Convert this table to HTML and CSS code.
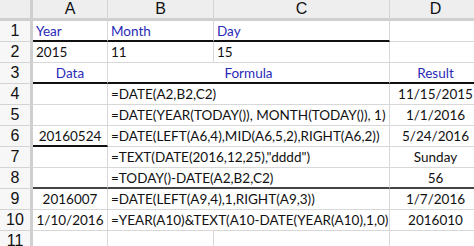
FILE: index.html
```html
<!DOCTYPE html>
<html>
<head>
<meta charset="utf-8">
<link rel="stylesheet" href="styles.css">
</head>
<body>
<div class="sheet">
  <div class="hd corner"></div>
  <div class="hd col">A</div>
  <div class="hd col">B</div>
  <div class="hd col">C</div>
  <div class="hd col">D</div>

  <div class="rh">1</div>
  <div class="c lbl thick">Year</div>
  <div class="c lbl thick">Month</div>
  <div class="c lbl thick">Day</div>
  <div class="c"></div>

  <div class="rh">2</div>
  <div class="c">2015</div>
  <div class="c">11</div>
  <div class="c">15</div>
  <div class="c"></div>

  <div class="rh">3</div>
  <div class="c lbl ctr thick">Data</div>
  <div class="c lbl ctr thick span2">Formula</div>
  <div class="c lbl ctr thick">Result</div>

  <div class="rh">4</div>
  <div class="c"></div>
  <div class="c span2">=DATE(A2,B2,C2)</div>
  <div class="c ctr">11/15/2015</div>

  <div class="rh">5</div>
  <div class="c"></div>
  <div class="c span2">=DATE(YEAR(TODAY()), MONTH(TODAY()), 1)</div>
  <div class="c ctr">1/1/2016</div>

  <div class="rh">6</div>
  <div class="c ctr thick">20160524</div>
  <div class="c span2">=DATE(LEFT(A6,4),MID(A6,5,2),RIGHT(A6,2))</div>
  <div class="c ctr">5/24/2016</div>

  <div class="rh">7</div>
  <div class="c"></div>
  <div class="c span2">=TEXT(DATE(2016,12,25),"dddd")</div>
  <div class="c ctr">Sunday</div>

  <div class="rh">8</div>
  <div class="c dark"></div>
  <div class="c span2 dark">=TODAY()-DATE(A2,B2,C2)</div>
  <div class="c ctr dark">56</div>

  <div class="rh">9</div>
  <div class="c ctr">2016007</div>
  <div class="c span2">=DATE(LEFT(A9,4),1,RIGHT(A9,3))</div>
  <div class="c ctr">1/7/2016</div>

  <div class="rh">10</div>
  <div class="c ctr">1/10/2016</div>
  <div class="c span2 clip">=YEAR(A10)&amp;TEXT(A10-DATE(YEAR(A10),1,0),"000")</div>
  <div class="c ctr">2016010</div>

  <div class="rh">11</div>
  <div class="c"></div>
  <div class="c"></div>
  <div class="c"></div>
  <div class="c"></div>
</div>
</body>
</html>
```
FILE: styles.css
```css
html, body {
  margin: 0;
  padding: 0;
  background: #ffffff;
  overflow: hidden;
}
.sheet {
  display: grid;
  grid-template-columns: 33px 75px 106px 176px 92px;
  grid-auto-rows: 21px;
  width: 482px;
  font-family: "Lato", "Open Sans", sans-serif;
  font-size: 13.5px;
  color: #111111;
}
.hd {
  background: #eeeeee;
  border-bottom: 3px solid #cfcfcf;
  border-right: 1px solid #d4d4d4;
  box-sizing: border-box;
  font-family: "Liberation Sans", Arial, sans-serif;
  font-size: 16px;
  color: #111;
  display: flex;
  align-items: center;
  justify-content: center;
}
.corner {
  border-right: 3px solid #cfcfcf;
}
.rh {
  background: #f7f7f7;
  border-right: 3px solid #cfcfcf;
  border-bottom: 1px solid #d4d4d4;
  box-sizing: border-box;
  font-family: "Liberation Sans", Arial, sans-serif;
  font-size: 16px;
  color: #111;
  display: flex;
  align-items: center;
  justify-content: center;
}
.c {
  border-right: 1px solid #d8d8d8;
  border-bottom: 1px solid #d8d8d8;
  box-sizing: border-box;
  padding: 0 3px;
  white-space: nowrap;
  overflow: hidden;
  display: flex;
  align-items: center;
}
.clip {
  padding-right: 0;
}
.span2 {
  grid-column: span 2;
}
.ctr {
  justify-content: center;
}
.lbl {
  color: #2a2ab8;
}
.thick {
  border-bottom: 2px solid #111111;
}
.dark {
  border-bottom: 2px solid #444444;
}
```
